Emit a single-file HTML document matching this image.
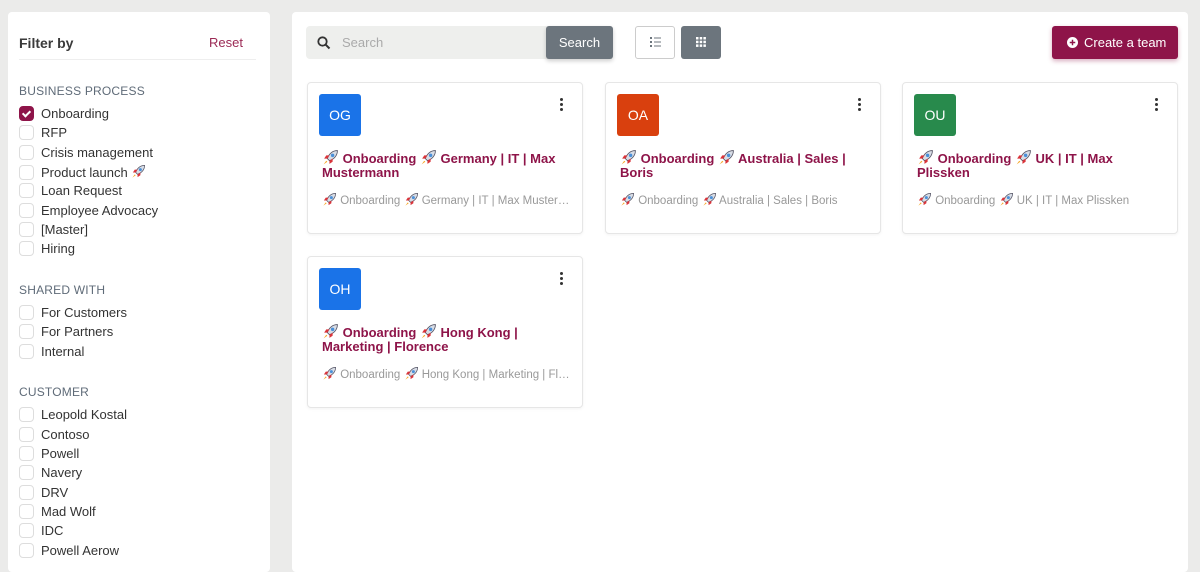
<!DOCTYPE html>
<html><head><meta charset="utf-8"><style>
*{box-sizing:border-box;margin:0;padding:0}
body{width:1200px;height:564px;overflow:hidden;background:#ebebea;font-family:"Liberation Sans",sans-serif;position:relative;color:#333}
.side{position:absolute;left:8px;top:12px;width:262px;height:560px;background:#fff;border-radius:4px}
.ttl{position:absolute;left:11px;top:23px;font-size:14px;font-weight:bold;color:#3a3a3a}
.reset{position:absolute;left:201px;top:23px;font-size:13px;color:#9b2a55}
.hr{position:absolute;left:11px;top:47px;width:237px;height:1px;background:#eee}
.h{position:absolute;left:11px;font-size:12px;color:#5f6b78;letter-spacing:.2px}
.it{position:absolute;left:11px;font-size:13px;color:#333;height:16px;line-height:16px}
.it i{display:inline-block;width:15px;height:15px;border:1px solid #ddd;border-radius:4px;vertical-align:-3px;margin-right:7px}
.it i.on{background:#8e1449;border-color:#8e1449;position:relative}
.it i.on:after{content:"";position:absolute;left:4px;top:2px;width:3px;height:6px;border:solid #fff;border-width:0 2px 2px 0;transform:rotate(45deg)}
.main{position:absolute;left:292px;top:12px;width:896px;height:560px;background:#fff;border-radius:4px}
.search{position:absolute;left:14px;top:14px;width:307px;height:33px;background:#eeefed;border-radius:4px}
.search span{position:absolute;left:36px;top:9px;font-size:13px;color:#aaa}
.sbtn{position:absolute;left:254px;top:14px;width:67px;height:33px;background:#6c757d;border-radius:3px;color:#fff;font-size:13px;text-align:center;line-height:33px;box-shadow:0 2px 4px rgba(0,0,0,.2)}
.vb{position:absolute;top:14px;width:40px;height:33px;border-radius:3px}
.create{position:absolute;left:760px;top:14px;width:126px;height:33px;background:#8e1449;border-radius:3px;color:#fff;font-size:13px;line-height:33px;box-shadow:0 2px 5px rgba(142,20,73,.35)}
.card{position:absolute;width:276px;height:152px;border:1px solid #e6e6e6;border-radius:4px;background:#fff;box-shadow:0 1px 3px rgba(0,0,0,.05)}
.av{position:absolute;left:11px;top:11px;width:42px;height:42px;border-radius:3px;color:#fff;font-size:14px;text-align:center;line-height:42px}
.kb{position:absolute;left:252px;top:15px;width:3px}
.kb b{display:block;width:3px;height:3px;border-radius:50%;background:#333;margin-bottom:2px}
.t{position:absolute;left:14px;top:66px;width:240px;font-size:13px;font-weight:bold;color:#8e1449;line-height:14px}
.s{position:absolute;left:14px;top:109px;width:248px;font-size:11.5px;color:#999;white-space:nowrap;overflow:hidden;text-overflow:ellipsis}
.r{display:inline-block;width:17px;height:17px;vertical-align:-3px}
.s .r{width:15px;height:15px}
.it .r{width:15px;height:15px;vertical-align:-2px}
</style></head><body>
<svg width="0" height="0" style="position:absolute"><defs><symbol id="rk" viewBox="0 0 16 16"><path d="M14.5 1.5C10 1.5 6.5 4.5 5 9l2 2c4.5-1.5 7.5-5 7.5-9.5z" fill="#d8dde6" stroke="#556" stroke-width=".8"/><circle cx="10" cy="6" r="1.6" fill="#4a90d9"/><path d="M5 9L2 9l2-3 3 0zM7 11l0 3 3-2 0-3z" fill="#d9343a"/><path d="M4 11l-2.5 3.5L5 12z" fill="#f6a623"/></symbol></defs></svg>
<div class="side">
<div class="ttl">Filter by</div><div class="reset">Reset</div><div class="hr"></div>
<div class="h" style="top:72px">BUSINESS PROCESS</div>
<div class="it" style="top:94px"><i class="on"></i>Onboarding</div>
<div class="it" style="top:113px"><i></i>RFP</div>
<div class="it" style="top:133px"><i></i>Crisis management</div>
<div class="it" style="top:152px"><i></i>Product launch <svg class="r"><use href="#rk"/></svg></div>
<div class="it" style="top:171px"><i></i>Loan Request</div>
<div class="it" style="top:191px"><i></i>Employee Advocacy</div>
<div class="it" style="top:210px"><i></i>[Master]</div>
<div class="it" style="top:229px"><i></i>Hiring</div>
<div class="h" style="top:271px">SHARED WITH</div>
<div class="it" style="top:293px"><i></i>For Customers</div>
<div class="it" style="top:312px"><i></i>For Partners</div>
<div class="it" style="top:332px"><i></i>Internal</div>
<div class="h" style="top:373px">CUSTOMER</div>
<div class="it" style="top:395px"><i></i>Leopold Kostal</div>
<div class="it" style="top:415px"><i></i>Contoso</div>
<div class="it" style="top:434px"><i></i>Powell</div>
<div class="it" style="top:453px"><i></i>Navery</div>
<div class="it" style="top:473px"><i></i>DRV</div>
<div class="it" style="top:492px"><i></i>Mad Wolf</div>
<div class="it" style="top:511px"><i></i>IDC</div>
<div class="it" style="top:531px"><i></i>Powell Aerow</div>
</div>
<div class="main">
<div class="search"><svg style="position:absolute;left:11px;top:10px" width="14" height="14" viewBox="0 0 14 14"><circle cx="5.5" cy="5.5" r="4.2" fill="none" stroke="#333" stroke-width="1.8"/><path d="M8.6 8.6L12.5 12.5" stroke="#333" stroke-width="2"/></svg><span>Search</span></div>
<div class="sbtn">Search</div>
<div class="vb" style="left:343px;border:1px solid #ccc;background:#fff"><svg style="position:absolute;left:14px;top:10px" width="11" height="10" viewBox="0 0 11 10"><g fill="#6c757d"><rect x="0" y="0" width="2" height="2"/><rect x="0" y="4" width="2" height="2"/><rect x="0" y="8" width="2" height="2"/><rect x="4" y="0.5" width="7" height="1"/><rect x="4" y="4.5" width="7" height="1"/><rect x="4" y="8.5" width="7" height="1"/></g></svg></div>
<div class="vb" style="left:389px;background:#6c757d"><svg style="position:absolute;left:15px;top:11px" width="10" height="10" viewBox="0 0 10 10"><g fill="#fff"><rect x="0" y="0" width="2.5" height="2.5"/><rect x="3.7" y="0" width="2.5" height="2.5"/><rect x="7.4" y="0" width="2.5" height="2.5"/><rect x="0" y="3.7" width="2.5" height="2.5"/><rect x="3.7" y="3.7" width="2.5" height="2.5"/><rect x="7.4" y="3.7" width="2.5" height="2.5"/><rect x="0" y="7.4" width="2.5" height="2.5"/><rect x="3.7" y="7.4" width="2.5" height="2.5"/><rect x="7.4" y="7.4" width="2.5" height="2.5"/></g></svg></div>
<div class="create"><svg style="position:absolute;left:15px;top:11px" width="11" height="11" viewBox="0 0 12 12"><circle cx="6" cy="6" r="6" fill="#fff"/><path d="M6 3v6M3 6h6" stroke="#8e1449" stroke-width="1.6"/></svg><span style="position:absolute;left:32px">Create a team</span></div>

<div class="card" style="left:15px;top:70px"><div class="av" style="background:#1a73e8">OG</div><div class="kb"><b></b><b></b><b></b></div>
<div class="t"><svg class="r"><use href="#rk"/></svg> Onboarding <svg class="r"><use href="#rk"/></svg> Germany | IT | Max Mustermann</div>
<div class="s"><svg class="r"><use href="#rk"/></svg> Onboarding <svg class="r"><use href="#rk"/></svg> Germany | IT | Max Mustermann</div></div>

<div class="card" style="left:313px;top:70px"><div class="av" style="background:#d9400e">OA</div><div class="kb"><b></b><b></b><b></b></div>
<div class="t"><svg class="r"><use href="#rk"/></svg> Onboarding <svg class="r"><use href="#rk"/></svg> Australia | Sales | Boris</div>
<div class="s"><svg class="r"><use href="#rk"/></svg> Onboarding <svg class="r"><use href="#rk"/></svg> Australia | Sales | Boris</div></div>

<div class="card" style="left:610px;top:70px"><div class="av" style="background:#288a4c">OU</div><div class="kb"><b></b><b></b><b></b></div>
<div class="t" style="width:215px"><svg class="r"><use href="#rk"/></svg> Onboarding <svg class="r"><use href="#rk"/></svg> UK | IT | Max Plissken</div>
<div class="s"><svg class="r"><use href="#rk"/></svg> Onboarding <svg class="r"><use href="#rk"/></svg> UK | IT | Max Plissken</div></div>

<div class="card" style="left:15px;top:244px"><div class="av" style="background:#1a73e8">OH</div><div class="kb"><b></b><b></b><b></b></div>
<div class="t"><svg class="r"><use href="#rk"/></svg> Onboarding <svg class="r"><use href="#rk"/></svg> Hong Kong | Marketing | Florence</div>
<div class="s"><svg class="r"><use href="#rk"/></svg> Onboarding <svg class="r"><use href="#rk"/></svg> Hong Kong | Marketing | Florence</div></div>
</div>
</body></html>
